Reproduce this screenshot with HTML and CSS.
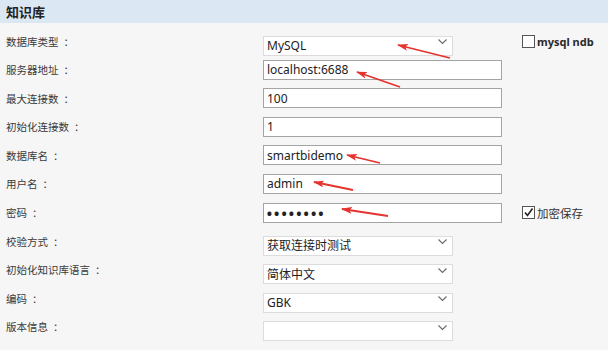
FILE: index.html
```html
<!DOCTYPE html>
<html lang="zh-CN">
<head>
    <meta charset="UTF-8">
    <title>知识库</title>
    <link rel="stylesheet" href="styles.css">
</head>
<body>
    <div class="panel">
        <div class="panel-title">知识库</div>
        <div class="form">
            <label class="lbl">数据库类型<span class="colon">：</span></label>
            <div class="ctl">
                <span class="sel"><select><option>MySQL</option></select><svg class="chev" viewBox="0 0 9 5"><path d="M0.5 0.5 L4.5 4.5 L8.5 0.5" /></svg></span>
            </div>
            <div class="extra"><label class="chk"><span class="box"></span><span class="chk-text bold">mysql ndb</span></label></div>

            <label class="lbl">服务器地址<span class="colon">：</span></label>
            <div class="ctl"><input class="txt" type="text" value="localhost:6688"></div>
            <div class="extra"></div>

            <label class="lbl">最大连接数<span class="colon">：</span></label>
            <div class="ctl"><input class="txt" type="text" value="100"></div>
            <div class="extra"></div>

            <label class="lbl">初始化连接数<span class="colon">：</span></label>
            <div class="ctl"><input class="txt" type="text" value="1"></div>
            <div class="extra"></div>

            <label class="lbl">数据库名<span class="colon">：</span></label>
            <div class="ctl"><input class="txt" type="text" value="smartbidemo"></div>
            <div class="extra"></div>

            <label class="lbl">用户名<span class="colon">：</span></label>
            <div class="ctl"><input class="txt" type="text" value="admin"></div>
            <div class="extra"></div>

            <label class="lbl">密码<span class="colon">：</span></label>
            <div class="ctl"><input class="txt pwd" type="password" value="12345678"></div>
            <div class="extra"><label class="chk"><span class="box"><svg viewBox="0 0 11 11"><path d="M2 5.5 L4.5 8.5 L9.5 1.5" /></svg></span><span class="chk-text">加密保存</span></label></div>

            <label class="lbl">校验方式<span class="colon">：</span></label>
            <div class="ctl">
                <span class="sel"><select><option>获取连接时测试</option></select><svg class="chev" viewBox="0 0 9 5"><path d="M0.5 0.5 L4.5 4.5 L8.5 0.5" /></svg></span>
            </div>
            <div class="extra"></div>

            <label class="lbl">初始化知识库语言<span class="colon">：</span></label>
            <div class="ctl">
                <span class="sel"><select><option>简体中文</option></select><svg class="chev" viewBox="0 0 9 5"><path d="M0.5 0.5 L4.5 4.5 L8.5 0.5" /></svg></span>
            </div>
            <div class="extra"></div>

            <label class="lbl">编码<span class="colon">：</span></label>
            <div class="ctl">
                <span class="sel"><select><option>GBK</option></select><svg class="chev" viewBox="0 0 9 5"><path d="M0.5 0.5 L4.5 4.5 L8.5 0.5" /></svg></span>
            </div>
            <div class="extra"></div>

            <label class="lbl">版本信息<span class="colon">：</span></label>
            <div class="ctl">
                <span class="sel"><select><option></option></select><svg class="chev" viewBox="0 0 9 5"><path d="M0.5 0.5 L4.5 4.5 L8.5 0.5" /></svg></span>
            </div>
            <div class="extra"></div>
        </div>

        <!-- red annotation arrows drawn over the form -->
        <svg class="marks" width="608" height="350">
            <defs>
                <marker id="ah" viewBox="0 0 11 7" refX="10" refY="3.5" markerWidth="11" markerHeight="7" markerUnits="userSpaceOnUse" orient="auto">
                    <path d="M0 0 L11 3.5 L0 7 L2.5 3.5 Z" />
                </marker>
            </defs>
            <line x1="450" y1="58" x2="398" y2="45" />
            <line x1="400" y1="87" x2="357" y2="72" />
            <line x1="380" y1="163" x2="347" y2="155" />
            <line x1="353" y1="190" x2="314" y2="182" />
            <line x1="388" y1="216" x2="342" y2="209" />
        </svg>
    </div>
</body>
</html>
```

FILE: styles.css
```css
body {
    margin: 0;
    background: #f6f6f6;
    font-family: "Noto Sans CJK SC", "Noto Sans", sans-serif;
    color: #333;
}
.panel {
    position: relative;
    height: 350px;
}
.panel-title {
    height: 23px;
    line-height: 23px;
    padding-left: 6px;
    background: #dce7f4;
    font-size: 13px;
    font-weight: bold;
    color: #222;
}
.form {
    display: grid;
    grid-template-columns: 257px 259px 1fr;
    grid-auto-rows: 20px;
    row-gap: 8.6px;
    padding: 8px 0 0 6px;
}
.lbl {
    align-self: center;
    font-size: 10.5px;
    color: #3a3a3a;
}
.colon {
    margin-left: 5px;
}
.ctl {
    display: flex;
}
.txt {
    width: 239px;
    height: 20px;
    box-sizing: border-box;
    margin: 0;
    padding: 0 3px;
    border: 1px solid #a4a4a4;
    background: #fff;
    font-family: "Noto Sans", "Noto Sans CJK SC", sans-serif;
    font-size: 12px;
    color: #222;
    outline: none;
}
.pwd {
    font-size: 18px;
    letter-spacing: 0.6px;
    padding-left: 2px;
}
.sel {
    position: relative;
    display: block;
    width: 190px;
    height: 20px;
}
.sel select {
    -webkit-appearance: none;
    appearance: none;
    width: 100%;
    height: 100%;
    margin: 0;
    padding: 0 3px;
    border: 1px solid #dcdcdc;
    border-radius: 0;
    background: #fff;
    font-family: "Noto Sans", "Noto Sans CJK SC", sans-serif;
    font-size: 12px;
    color: #222;
    outline: none;
}
.chev {
    position: absolute;
    right: 6px;
    top: 8px;
    width: 9px;
    height: 5px;
    pointer-events: none;
}
.chev path {
    fill: none;
    stroke: #6a6a6a;
    stroke-width: 1.1;
}
.extra {
    display: flex;
    align-items: center;
}
.chk {
    display: flex;
    align-items: center;
    gap: 2px;
}
.box {
    width: 11px;
    height: 11px;
    border: 1px solid #555;
    background: #fff;
    display: flex;
}
.box svg {
    width: 11px;
    height: 11px;
}
.box path {
    fill: none;
    stroke: #222;
    stroke-width: 1.6;
}
.chk-text {
    font-size: 11.5px;
    color: #333;
}
.chk-text.bold {
    font-family: "Noto Sans", sans-serif;
    font-size: 11px;
    font-weight: bold;
    color: #2a2a2a;
}
.marks {
    position: absolute;
    left: 0;
    top: 0;
    pointer-events: none;
}
.marks line {
    stroke: #e5332e;
    stroke-width: 1.8;
    marker-end: url(#ah);
}
.marks marker path {
    fill: #e5332e;
}
```
